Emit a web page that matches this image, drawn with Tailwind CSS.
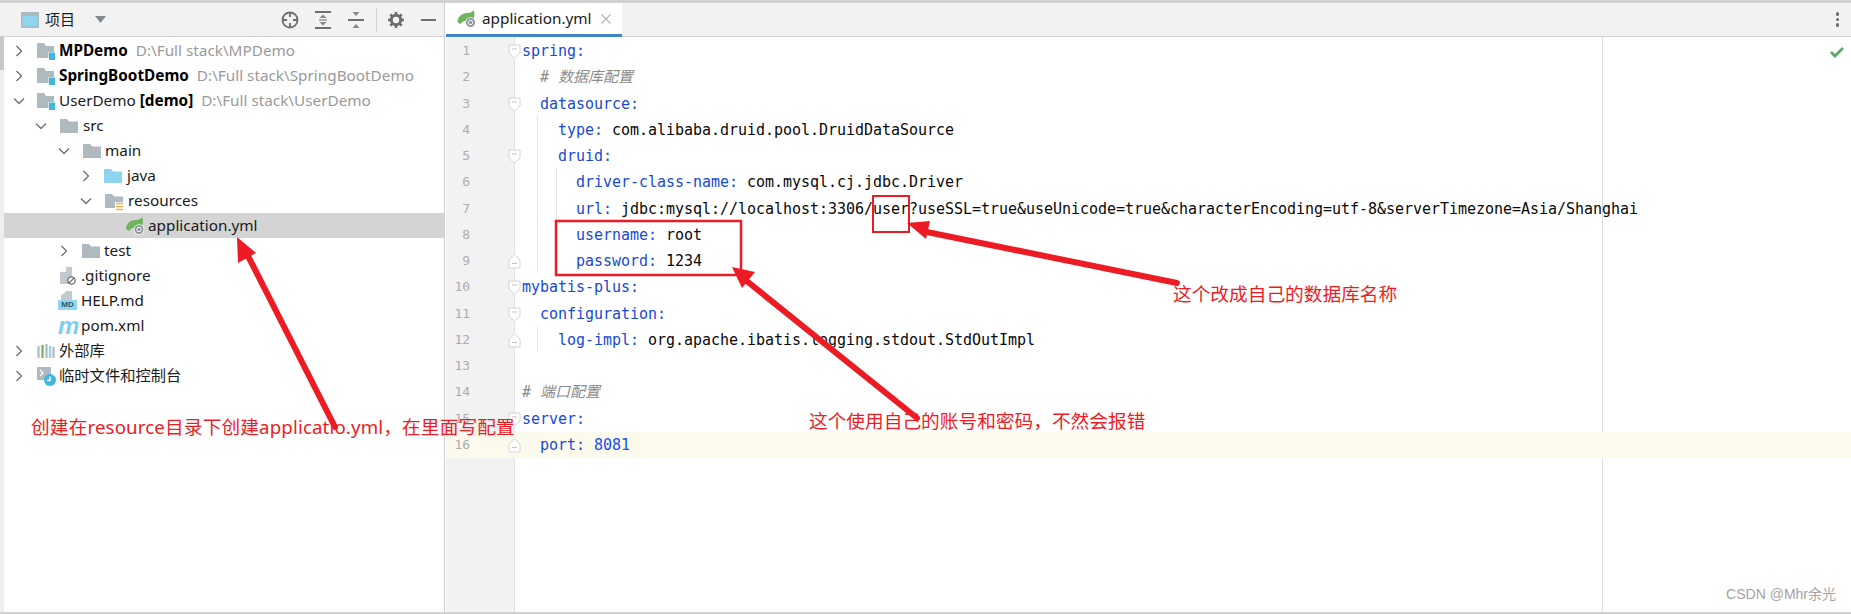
<!DOCTYPE html>
<html lang="zh-CN">
<head>
  <meta charset="UTF-8" />
  <title>application.yml</title>
  <script src="https://cdn.jsdelivr.net/npm/@tailwindcss/browser@4"></script>
</head>
<body class="bg-white overflow-hidden">
  <svg width="0" height="0" class="absolute">
    <defs>
      <symbol id="right" viewBox="0 0 8 12"><path d="M1.5 1 L6.5 6 L1.5 11" fill="none" stroke="#6e6e6e" stroke-width="1.3"/></symbol>
      <symbol id="down" viewBox="0 0 12 8"><path d="M1 1.5 L6 6.5 L11 1.5" fill="none" stroke="#6e6e6e" stroke-width="1.3"/></symbol>
      <symbol id="module" viewBox="0 0 18 18"><path d="M0 0h7l2 3h8v12H0z" fill="#afb9c0"/><rect x="11.500" y="9" width="7" height="8" fill="#fff"/><rect x="12" y="9.500" width="7" height="7.500" fill="#40b6e0"/></symbol>
      <symbol id="folder" viewBox="0 0 18 14"><path d="M0 0h7l2 2.500h9V14H0z" fill="#afb9c0"/></symbol>
      <symbol id="folder-src" viewBox="0 0 18 14"><path d="M0 0h7l2 2.500h9V14H0z" fill="#8fd5f0"/></symbol>
      <symbol id="folder-res" viewBox="0 0 18 18"><path d="M0 0h7l2 2.500h9V14H0z" fill="#afb9c0"/><rect x="10" y="8" width="9" height="10" fill="#fff"/><path d="M11 9.500h7M11 12.500h7M11 15.500h7" stroke="#e8b45a" stroke-width="1.600"/></symbol>
      <symbol id="yaml" viewBox="0 0 18 18"><path d="M0 11C1 5 6 3 10 3c3 0 5-1 6-3 2 4 1 9-2 11H8c-3 0-4 2-5 3-1-1-3-1-3-3z" fill="#6fb45e"/><circle cx="13" cy="12.500" r="5.300" fill="#fff"/><circle cx="13" cy="12.500" r="4.500" fill="#8a979f"/><circle cx="13" cy="12.500" r="2.200" fill="none" stroke="#fff" stroke-width="1"/></symbol>
      <symbol id="file" viewBox="0 0 13 17"><path d="M0 5L6 0h6v17H0z" fill="#c3cacf"/><path d="M0 5h6V0z" fill="#fff"/></symbol>
      <symbol id="fold-open" viewBox="0 0 13 15"><path d="M1 1h11v8l-5.500 5L1 9z" fill="#fff" stroke="#d4d4d4"/><path d="M4 5h5" stroke="#c0c0c0"/></symbol>
      <symbol id="fold-close" viewBox="0 0 13 15"><path d="M1 14h11V6L6.500 1 1 6z" fill="#fff" stroke="#d4d4d4"/><path d="M4 9.500h5" stroke="#c0c0c0"/></symbol>
    </defs>
  </svg>

  <div class="relative w-[1851px] h-[614px] overflow-hidden flex flex-col border-t-[3px] border-b-2 border-[#d1d1d1] bg-white font-['Noto_Sans','Noto_Sans_CJK_SC',sans-serif] text-[15.300px] text-[#1a1a1a]">
    <div class="flex flex-1 min-h-0">

      <!-- project panel -->
      <aside class="w-[445px] shrink-0 flex flex-col border-r border-[#d1d1d1]">
        <div class="h-[34px] shrink-0 flex items-center pl-[21px] bg-[#f2f2f2] border-b border-[#d1d1d1]">
          <svg class="w-[18px] h-[16px] mr-[6px]" viewBox="0 0 18 16"><rect width="18" height="16" fill="#afb9c0"/><rect x="1.500" y="4" width="15" height="10.500" fill="#8fd5f0"/></svg>
          <span class="w-[50px] text-[15px]">项目</span>
          <svg class="w-[11px] h-[7px]" viewBox="0 0 11 7"><path d="M0 0h11L5.500 7z" fill="#7f8b91"/></svg>
          <div class="ml-auto flex items-center pr-[8px]">
            <svg class="w-[18px] h-[18px] mr-[16px]" viewBox="0 0 18 18"><circle cx="9" cy="9" r="7.500" fill="none" stroke="#6e6e6e" stroke-width="1.800"/><path d="M9 1v5M9 12v5M1 9h5M12 9h5" stroke="#6e6e6e" stroke-width="1.800"/></svg>
            <svg class="w-[16px] h-[18px] mr-[17px]" viewBox="0 0 16 18"><path d="M0 1h16M0 17h16" stroke="#6e6e6e" stroke-width="2"/><path d="M4.500 7L8 3.500 11.500 7zM4.500 11L8 14.500 11.500 11z" fill="#7f8b91"/><path d="M4 9h8" stroke="#6e6e6e"/></svg>
            <svg class="w-[16px] h-[18px] mr-[12px]" viewBox="0 0 16 18"><path d="M0 9h16" stroke="#6e6e6e" stroke-width="2"/><path d="M4.500 1L8 5 11.500 1zM4.500 17L8 13 11.500 17z" fill="#7f8b91"/></svg>
            <div class="w-px h-[24px] bg-[#d1d1d1] mr-[11px]"></div>
            <svg class="w-[16px] h-[16px] mr-[17px]" viewBox="0 0 16 16"><circle cx="8" cy="8" r="4.700" fill="none" stroke="#6e6e6e" stroke-width="3"/><path d="M8 0v3M8 13v3M0 8h3M13 8h3M2.300 2.300l2 2M11.700 11.700l2 2M2.300 13.700l2-2M11.700 4.300l2-2" stroke="#6e6e6e" stroke-width="2.600"/></svg>
            <div class="w-[15px] h-[2px] bg-[#6e6e6e]"></div>
          </div>
        </div>

        <div class="flex flex-1 min-h-0">
          <div class="w-[4px] shrink-0 bg-[#efefef]"><div class="h-[33px] bg-[#c9c9c9]"></div></div>
          <div class="flex-1 pt-[1px] whitespace-nowrap">
            <div class="h-[25px] flex items-center pl-[11px]"><svg class="w-[8px] h-[12px] mr-[14px]"><use href="#right"/></svg><svg class="w-[18px] h-[18px] mr-[4px] mt-[2px]"><use href="#module"/></svg><b class="text-black">MPDemo</b><span class="ml-[8px] text-[#9a9a9a]">D:\Full stack\MPDemo</span></div>
            <div class="h-[25px] flex items-center pl-[11px]"><svg class="w-[8px] h-[12px] mr-[14px]"><use href="#right"/></svg><svg class="w-[18px] h-[18px] mr-[4px] mt-[2px]"><use href="#module"/></svg><b class="text-black">SpringBootDemo</b><span class="ml-[8px] text-[#9a9a9a]">D:\Full stack\SpringBootDemo</span></div>
            <div class="h-[25px] flex items-center pl-[9px]"><svg class="w-[12px] h-[8px] mr-[12px]"><use href="#down"/></svg><svg class="w-[18px] h-[18px] mr-[4px] mt-[2px]"><use href="#module"/></svg><span>UserDemo <b class="text-black">[demo]</b></span><span class="ml-[8px] text-[#9a9a9a]">D:\Full stack\UserDemo</span></div>
            <div class="h-[25px] flex items-center pl-[31px]"><svg class="w-[12px] h-[8px] mr-[13px]"><use href="#down"/></svg><svg class="w-[18px] h-[14px] mr-[5px]"><use href="#folder"/></svg><span>src</span></div>
            <div class="h-[25px] flex items-center pl-[54px]"><svg class="w-[12px] h-[8px] mr-[13px]"><use href="#down"/></svg><svg class="w-[18px] h-[14px] mr-[4px]"><use href="#folder"/></svg><span>main</span></div>
            <div class="h-[25px] flex items-center pl-[78px]"><svg class="w-[8px] h-[12px] mr-[14px]"><use href="#right"/></svg><svg class="w-[18px] h-[14px] mr-[5px]"><use href="#folder-src"/></svg><span>java</span></div>
            <div class="h-[25px] flex items-center pl-[76px]"><svg class="w-[12px] h-[8px] mr-[13px]"><use href="#down"/></svg><svg class="w-[18px] h-[18px] mr-[5px] mt-[4px]"><use href="#folder-res"/></svg><span>resources</span></div>
            <div class="h-[25px] flex items-center pl-[122px] bg-[#d4d4d4]"><svg class="w-[18px] h-[18px] mr-[4px]"><use href="#yaml"/></svg><span>application.yml</span></div>
            <div class="h-[25px] flex items-center pl-[56px]"><svg class="w-[8px] h-[12px] mr-[14px]"><use href="#right"/></svg><svg class="w-[18px] h-[14px] mr-[4px]"><use href="#folder"/></svg><span>test</span></div>
            <div class="h-[25px] flex items-center pl-[56px]"><span class="relative w-[17px] h-[18px] mr-[4px]"><svg class="w-[13px] h-[17px]"><use href="#file"/></svg><svg class="absolute left-[7px] top-[9px] w-[9px] h-[9px]" viewBox="0 0 9 9"><circle cx="4.500" cy="4.500" r="3.700" fill="#fff" stroke="#6e6e6e" stroke-width="1.300"/><path d="M2 7L7 2" stroke="#6e6e6e" stroke-width="1.300"/></svg></span><span>.gitignore</span></div>
            <div class="h-[25px] flex items-center pl-[54px]"><span class="relative w-[19px] h-[19px] mr-[4px]"><svg class="absolute left-[3px] top-0 w-[12px] h-[12px]" viewBox="0 0 13 13"><path d="M0 5L6 0h6v13H0z" fill="#c3cacf"/></svg><span class="absolute left-0 top-[9px] w-[19px] h-[10px] bg-[#8fd5f0] text-[8px] leading-[10px] font-bold text-center text-[#2b5a6e] font-['Liberation_Sans',sans-serif]">MD</span></span><span>HELP.md</span></div>
            <div class="h-[25px] flex items-center pl-[54px]"><span class="w-[19px] mr-[4px] text-[24px] leading-[20px] font-bold italic text-[#7fcdee] font-['Liberation_Sans',sans-serif]">m</span><span>pom.xml</span></div>
            <div class="h-[25px] flex items-center pl-[11px]"><svg class="w-[8px] h-[12px] mr-[14px]"><use href="#right"/></svg><svg class="w-[18px] h-[14px] mr-[4px]" viewBox="0 0 18 14"><path d="M1.500 2v12M9.500 0v14M16.500 3v11" stroke="#afb9c0" stroke-width="2.200"/><path d="M5.500 1v13" stroke="#6fb45e" stroke-width="2.200"/><path d="M13 2v12" stroke="#8fd5f0" stroke-width="2.200"/></svg><span>外部库</span></div>
            <div class="h-[25px] flex items-center pl-[11px]"><svg class="w-[8px] h-[12px] mr-[14px]"><use href="#right"/></svg><svg class="w-[19px] h-[19px] mr-[3px] mt-[1px]" viewBox="0 0 19 19"><path d="M0 0h14v13H0z" fill="#afb9c0"/><path d="M3 3l3 3-3 3" fill="none" stroke="#fff" stroke-width="1.300"/><circle cx="13" cy="13" r="6" fill="#40b6e0"/><path d="M13 9.500V13.500H10" fill="none" stroke="#fff" stroke-width="1.400"/></svg><span>临时文件和控制台</span></div>
          </div>
        </div>
      </aside>

      <!-- editor -->
      <main class="flex-1 min-w-0 flex flex-col pl-px">
        <div class="h-[34px] shrink-0 flex bg-[#f2f2f2] border-b border-[#d1d1d1]">
          <div class="w-[176px] h-[34px] flex items-center pl-[11px] bg-white border-b-[3px] border-[#4083c9]">
            <svg class="w-[19px] h-[18px] mr-[6px]"><use href="#yaml"/></svg>
            <span>application.yml</span>
            <svg class="w-[10px] h-[10px] ml-[9px]" viewBox="0 0 10 10"><path d="M0.500 0.500l9 9M9.500 0.500l-9 9" stroke="#b4b4b4" stroke-width="1.100"/></svg>
          </div>
          <div class="ml-auto mr-[12px] flex flex-col justify-center gap-[2px]">
            <span class="w-[3.500px] h-[3.500px] rounded-full bg-[#6e6e6e]"></span>
            <span class="w-[3.500px] h-[3.500px] rounded-full bg-[#6e6e6e]"></span>
            <span class="w-[3.500px] h-[3.500px] rounded-full bg-[#6e6e6e]"></span>
          </div>
        </div>

        <div class="relative flex-1 min-h-0 pt-[1px] bg-[linear-gradient(to_right,#f2f2f2_68px,#e2e2e2_68px,#e2e2e2_69px,transparent_69px)] font-['DejaVu_Sans_Mono','Noto_Sans_CJK_SC',monospace] text-[15px] tracking-[-0.03px] leading-[26.270px] [&_span]:whitespace-pre">
          <div class="absolute left-[1156px] top-0 bottom-0 w-px bg-[#dedede]"></div>
          <svg class="absolute left-[1384px] top-[9px] w-[14px] h-[12px]" viewBox="0 0 14 12"><path d="M1 6l4 4 8-8" fill="none" stroke="#59a869" stroke-width="2.800"/></svg>
          <div class="absolute left-[91px] top-[79px] h-[157px] w-px bg-[#e4e4e4]"></div>
          <div class="absolute left-[110px] top-[131px] h-[105px] w-px bg-[#e4e4e4]"></div>
          <div class="absolute left-[91px] top-[290px] h-[25px] w-px bg-[#e4e4e4]"></div>

          <div class="relative h-[26.270px] flex"><span class="w-[24px] text-right text-[13px] text-[#adadad]">1</span><svg class="absolute left-[62px] top-[6px] w-[13px] h-[15px]"><use href="#fold-open"/></svg><span class="pl-[52px] text-[#174ad4]">spring:</span></div>
          <div class="relative h-[26.270px] flex"><span class="w-[24px] text-right text-[13px] text-[#adadad]">2</span><span class="pl-[52px] italic text-[#8c8c8c]">  # 数据库配置</span></div>
          <div class="relative h-[26.270px] flex"><span class="w-[24px] text-right text-[13px] text-[#adadad]">3</span><svg class="absolute left-[62px] top-[6px] w-[13px] h-[15px]"><use href="#fold-open"/></svg><span class="pl-[52px] text-[#174ad4]">  datasource:</span></div>
          <div class="relative h-[26.270px] flex"><span class="w-[24px] text-right text-[13px] text-[#adadad]">4</span><span class="pl-[52px] text-[#080808]"><span class="text-[#174ad4]">    type:</span> com.alibaba.druid.pool.DruidDataSource</span></div>
          <div class="relative h-[26.270px] flex"><span class="w-[24px] text-right text-[13px] text-[#adadad]">5</span><svg class="absolute left-[62px] top-[6px] w-[13px] h-[15px]"><use href="#fold-open"/></svg><span class="pl-[52px] text-[#174ad4]">    druid:</span></div>
          <div class="relative h-[26.270px] flex"><span class="w-[24px] text-right text-[13px] text-[#adadad]">6</span><span class="pl-[52px] text-[#080808]"><span class="text-[#174ad4]">      driver-class-name:</span> com.mysql.cj.jdbc.Driver</span></div>
          <div class="relative h-[26.270px] flex"><span class="w-[24px] text-right text-[13px] text-[#adadad]">7</span><span class="pl-[52px] text-[#080808]"><span class="text-[#174ad4]">      url:</span> jdbc:mysql://localhost:3306/user?useSSL=true&amp;useUnicode=true&amp;characterEncoding=utf-8&amp;serverTimezone=Asia/Shanghai</span></div>
          <div class="relative h-[26.270px] flex"><span class="w-[24px] text-right text-[13px] text-[#adadad]">8</span><span class="pl-[52px] text-[#080808]"><span class="text-[#174ad4]">      username:</span> root</span></div>
          <div class="relative h-[26.270px] flex"><span class="w-[24px] text-right text-[13px] text-[#adadad]">9</span><svg class="absolute left-[62px] top-[6px] w-[13px] h-[15px]"><use href="#fold-close"/></svg><span class="pl-[52px] text-[#080808]"><span class="text-[#174ad4]">      password:</span> 1234</span></div>
          <div class="relative h-[26.270px] flex"><span class="w-[24px] text-right text-[13px] text-[#adadad]">10</span><svg class="absolute left-[62px] top-[6px] w-[13px] h-[15px]"><use href="#fold-open"/></svg><span class="pl-[52px] text-[#174ad4]">mybatis-plus:</span></div>
          <div class="relative h-[26.270px] flex"><span class="w-[24px] text-right text-[13px] text-[#adadad]">11</span><svg class="absolute left-[62px] top-[6px] w-[13px] h-[15px]"><use href="#fold-open"/></svg><span class="pl-[52px] text-[#174ad4]">  configuration:</span></div>
          <div class="relative h-[26.270px] flex"><span class="w-[24px] text-right text-[13px] text-[#adadad]">12</span><svg class="absolute left-[62px] top-[6px] w-[13px] h-[15px]"><use href="#fold-close"/></svg><span class="pl-[52px] text-[#080808]"><span class="text-[#174ad4]">    log-impl:</span> org.apache.ibatis.logging.stdout.StdOutImpl</span></div>
          <div class="relative h-[26.270px] flex"><span class="w-[24px] text-right text-[13px] text-[#adadad]">13</span></div>
          <div class="relative h-[26.270px] flex"><span class="w-[24px] text-right text-[13px] text-[#adadad]">14</span><span class="pl-[52px] italic text-[#8c8c8c]"># 端口配置</span></div>
          <div class="relative h-[26.270px] flex"><span class="w-[24px] text-right text-[13px] text-[#adadad]">15</span><svg class="absolute left-[62px] top-[6px] w-[13px] h-[15px]"><use href="#fold-open"/></svg><span class="pl-[52px] text-[#174ad4]">server:</span></div>
          <div class="relative h-[26.270px] flex bg-[#fcfaed]"><span class="w-[24px] text-right text-[13px] text-[#adadad]">16</span><svg class="absolute left-[62px] top-[6px] w-[13px] h-[15px]"><use href="#fold-close"/></svg><span class="pl-[52px] text-[#1750eb]"><span class="text-[#174ad4]">  port:</span> 8081</span></div>

          <span class="absolute right-[15px] top-[547px] font-['Liberation_Sans','Noto_Sans_CJK_SC',sans-serif] text-[14px] leading-[20px] tracking-normal text-[#a3a3a3]">CSDN @Mhr余光</span>
        </div>
      </main>
    </div>

    <!-- red annotations drawn on top of the screenshot -->
    <svg class="absolute left-0 top-[-3px] w-[1851px] h-[614px]" viewBox="0 0 1851 614" fill="none">
      <rect x="873" y="196" width="36" height="36" stroke="#ed1c24" stroke-width="2"/>
      <rect x="556" y="221" width="185" height="54" stroke="#ed1c24" stroke-width="2.500"/>
      <path d="M246 252L335 427" stroke="#ed1c24" stroke-width="6" stroke-linecap="round"/>
      <path d="M237 237L238 263L256 253z" fill="#ed1c24"/>
      <path d="M743 278L917 418" stroke="#ed1c24" stroke-width="6" stroke-linecap="round"/>
      <path d="M732 267L755 272L742 288z" fill="#ed1c24"/>
      <path d="M922 231L1177 283" stroke="#ed1c24" stroke-width="6" stroke-linecap="round"/>
      <path d="M907 223L930 221L926 239z" fill="#ed1c24"/>
    </svg>
    <span class="absolute left-[31px] top-[411px] text-[18.700px] tracking-[0.130px] leading-[26px] whitespace-nowrap text-[#ed1c24] font-['Noto_Sans','Noto_Sans_CJK_SC',sans-serif]">创建在resource目录下创建applicatio.yml，在里面写配置</span>
    <span class="absolute left-[809px] top-[403px] text-[18.700px] leading-[28px] whitespace-nowrap text-[#ed1c24] font-['Noto_Sans_CJK_SC',sans-serif]">这个使用自己的账号和密码，不然会报错</span>
    <span class="absolute left-[1173px] top-[276px] text-[18.700px] leading-[28px] whitespace-nowrap text-[#ed1c24] font-['Noto_Sans_CJK_SC',sans-serif]">这个改成自己的数据库名称</span>
  </div>
</body>
</html>
